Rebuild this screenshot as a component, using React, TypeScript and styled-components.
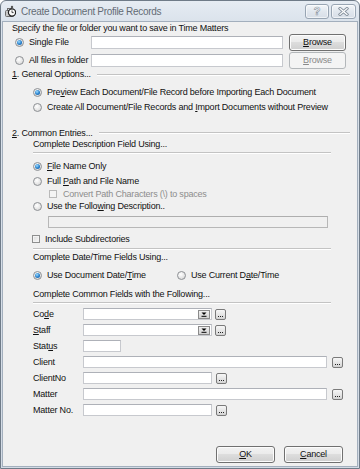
import styled, { createGlobalStyle, css } from "styled-components";

const GlobalStyle = createGlobalStyle`
  html, body { margin: 0; padding: 0; background: #ffffff; }
  body { font-family: "Liberation Sans", Arial, sans-serif; }
  * { box-sizing: border-box; }
`;

const Window = styled.div`
  width: 360px;
  height: 469px;
  display: flex;
  flex-direction: column;
  border: 1px solid #6f7b88;
  border-radius: 6px 6px 0 0;
  padding: 0 1px 1px;
  background: linear-gradient(#e6ecf3, #dae2eb 22px, #d3dbe5);
  overflow: hidden;
`;

const TitleBar = styled.div`
  height: 20px;
  display: flex;
  align-items: center;
  padding: 0 2px 0 3px;
`;

const Title = styled.div`
  flex: 1;
  margin-left: 5px;
  font-size: 10px;
  letter-spacing: -0.3px;
  color: #646c75;
  white-space: nowrap;
`;

const CaptionButtons = styled.div`
  display: flex;
  gap: 2px;
`;

const CaptionButton = styled.div<{ $w: number }>`
  width: ${(p) => p.$w}px;
  height: 15px;
  border: 1px solid #98a5b3;
  border-radius: 3px;
  background: linear-gradient(#f3f6f9, #e1e7ee 50%, #d7dee7);
  box-shadow: inset 0 0 0 1px rgba(255, 255, 255, 0.6);
  display: flex;
  align-items: center;
  justify-content: center;
  font-size: 11px;
  font-weight: bold;
  color: #ffffff;
  -webkit-text-stroke: 0.6px #8a95a1;
`;

const Client = styled.div`
  flex: 1;
  display: flex;
  flex-direction: column;
  background: #f0f0f0;
  border: 1px solid #a3afbd;
  padding: 0 7px 3px 9px;
  font-size: 9px;
  letter-spacing: -0.2px;
  color: #111111;
`;

const Line = styled.div<{ $mt?: number; $h: number; $indent?: number }>`
  display: flex;
  align-items: center;
  flex: none;
  height: ${(p) => p.$h}px;
  margin-top: ${(p) => p.$mt ?? 0}px;
  padding-left: ${(p) => p.$indent ?? 0}px;
  line-height: ${(p) => p.$h}px;
  white-space: nowrap;
`;

const GroupHeading = styled(Line)`
  &::after {
    content: "";
    flex: 1;
    margin-left: 6px;
    border-top: 1px solid #c3c3c3;
    border-bottom: 1px solid #ffffff;
  }
`;

const SubHeading = styled.div<{ $mt?: number }>`
  flex: none;
  margin: ${(p) => p.$mt ?? 0}px 19px 0 21px;
  height: 14px;
  line-height: 10px;
  padding-bottom: 3px;
  border-bottom: 1px solid #c3c3c3;
  box-shadow: 0 1px 0 #ffffff;
  white-space: nowrap;
`;

const Rule = styled.div<{ $mt?: number }>`
  flex: none;
  margin: ${(p) => p.$mt ?? 0}px 19px 0 21px;
  height: 2px;
  border-top: 1px solid #c3c3c3;
  border-bottom: 1px solid #ffffff;
`;

const Option = styled.label<{ $w?: number; $disabled?: boolean; $gap?: number }>`
  display: flex;
  align-items: center;
  gap: ${(p) => p.$gap ?? 5}px;
  width: ${(p) => (p.$w ? `${p.$w}px` : "auto")};
  flex: none;
  color: ${(p) => (p.$disabled ? "#8d8d8d" : "inherit")};
`;

const Radio = styled.span<{ $on?: boolean }>`
  width: 9px;
  height: 9px;
  flex: none;
  border-radius: 50%;
  border: 1px solid #8d9094;
  background: radial-gradient(circle at 40% 35%, #ffffff 0%, #e6e6e6 55%, #cfcfcf 100%);
  display: inline-flex;
  align-items: center;
  justify-content: center;
  ${(p) =>
    p.$on &&
    css`
      &::after {
        content: "";
        width: 5px;
        height: 5px;
        border-radius: 50%;
        background: radial-gradient(circle at 40% 35%, #9fdcff 0%, #2d86d0 50%, #0f4f97 100%);
      }
    `}
`;

const Check = styled.span<{ $disabled?: boolean }>`
  width: 8px;
  height: 8px;
  flex: none;
  border: 1px solid ${(p) => (p.$disabled ? "#b9b9b9" : "#8e8f8f")};
  background: ${(p) =>
    p.$disabled ? "#f4f4f4" : "linear-gradient(135deg, #dcdcdc, #f7f7f7)"};
  box-shadow: inset 0 0 0 1px ${(p) => (p.$disabled ? "#f4f4f4" : "#f3f3f3")};
`;

const Key = styled.u`
  text-decoration: underline;
  text-underline-offset: 1px;
`;

const TextBox = styled.div<{ $w: number; $disabled?: boolean }>`
  width: ${(p) => p.$w}px;
  height: 12px;
  flex: none;
  background: ${(p) => (p.$disabled ? "#f0f0f0" : "#ffffff")};
  border: 1px solid ${(p) => (p.$disabled ? "#b7b7b7" : "#c7c9ce")};
  border-top-color: ${(p) => (p.$disabled ? "#aeaeae" : "#aeb1b8")};
  display: flex;
  align-items: center;
  justify-content: flex-end;
  padding-right: 1px;
`;

const SourceBox = styled(TextBox)`
  height: 13px;
`;

const DescBox = styled(TextBox)`
  margin: 2px 0 0 36px;
`;

const DropButton = styled.div`
  width: 12px;
  height: 9px;
  border: 1px solid #8b8b8b;
  background: linear-gradient(#f0f0f0, #d3d3d3);
  display: flex;
  align-items: center;
  justify-content: center;
`;

const PushButton = styled.div<{ $w: number; $h: number; $disabled?: boolean; $ml?: number }>`
  width: ${(p) => p.$w}px;
  height: ${(p) => p.$h}px;
  flex: none;
  margin-left: ${(p) => p.$ml ?? 0}px;
  border: 1px solid ${(p) => (p.$disabled ? "#b3b7ba" : "#707070")};
  border-radius: 3px;
  background: ${(p) =>
    p.$disabled
      ? "#f4f4f4"
      : "linear-gradient(#f2f2f2, #ebebeb 45%, #dddddd 50%, #cfcfcf)"};
  box-shadow: inset 0 0 0 1px ${(p) => (p.$disabled ? "#f4f4f4" : "#fcfcfc")};
  color: ${(p) => (p.$disabled ? "#8a8a8a" : "#111111")};
  display: flex;
  align-items: center;
  justify-content: center;
  line-height: 1;
`;

const Ellipsis = styled.div<{ $gap: number }>`
  width: 11px;
  height: 11px;
  flex: none;
  margin-left: ${(p) => p.$gap}px;
  border: 1px solid #7a7a7a;
  border-radius: 2px;
  background: linear-gradient(#f6f6f6, #e6e6e6 50%, #d4d4d4);
  display: flex;
  align-items: flex-end;
  justify-content: center;
  padding-bottom: 2px;
  &::before {
    content: "";
    width: 5px;
    height: 1px;
    background: repeating-linear-gradient(90deg, #222 0 1px, transparent 1px 2px);
  }
`;

const FieldLabel = styled.span`
  width: 50px;
  flex: none;
`;

const Footer = styled.div`
  margin-top: auto;
  display: flex;
  justify-content: flex-end;
  gap: 9px;
  padding-right: 7px;
`;

function AppIcon() {
  return (
    <svg width="11" height="12" viewBox="0 0 11 12">
      <rect x="0.5" y="5.5" width="8" height="6" rx="1" fill="#c9c9c9" stroke="#6d6d6d" />
      <rect x="2.5" y="3.5" width="4" height="2" fill="none" stroke="#6d6d6d" />
      <circle cx="7" cy="7.5" r="3.6" fill="#fafafa" stroke="#222" strokeWidth="1.2" />
      <path d="M7 5.5 V7.6 H8.6" stroke="#222" strokeWidth="0.8" fill="none" />
      <circle cx="7" cy="2" r="1.2" fill="#555" />
    </svg>
  );
}

function CloseGlyph() {
  return (
    <svg width="11" height="9" viewBox="0 0 11 9">
      <path d="M2 1.5 L9 7.5 M9 1.5 L2 7.5" stroke="#8a95a1" strokeWidth="3" strokeLinecap="square" />
      <path d="M2 1.5 L9 7.5 M9 1.5 L2 7.5" stroke="#ffffff" strokeWidth="1.2" strokeLinecap="square" />
    </svg>
  );
}

function DropArrow() {
  return (
    <svg width="6" height="5" viewBox="0 0 6 5">
      <path d="M0.5 0.5 H5.5 L3 3 Z" fill="#000" />
      <rect x="0.5" y="3.8" width="5" height="1" fill="#000" />
    </svg>
  );
}

type Field = {
  label: React.ReactNode;
  width: number;
  combo?: boolean;
  more?: number;
};

const fields: Field[] = [
  { label: <>Co<Key>d</Key>e</>, width: 129, combo: true, more: 3 },
  { label: <><Key>S</Key>taff</>, width: 129, combo: true, more: 3 },
  { label: <>Stat<Key>u</Key>s</>, width: 38 },
  { label: "Client", width: 244, more: 5 },
  { label: "ClientNo", width: 129, more: 4 },
  { label: "Matter", width: 244, more: 5 },
  { label: "Matter No.", width: 129, more: 4 },
];

export default function App() {
  return (
    <>
      <GlobalStyle />
      <Window>
        <TitleBar>
          <AppIcon />
          <Title>Create Document Profile Records</Title>
          <CaptionButtons>
            <CaptionButton $w={24}>?</CaptionButton>
            <CaptionButton $w={25}>
              <CloseGlyph />
            </CaptionButton>
          </CaptionButtons>
        </TitleBar>
        <Client>
          <Line $h={12}>Specify the file or folder you want to save in Time Matters</Line>
          <Line $h={17} $indent={3}>
            <Option $w={76}>
              <Radio $on />
              Single File
            </Option>
            <SourceBox $w={192} />
            <PushButton $w={57} $h={17} $ml={6}>
              <Key>B</Key>rowse
            </PushButton>
          </Line>
          <Line $h={17} $mt={1} $indent={3}>
            <Option $w={76}>
              <Radio />
              All files in folder
            </Option>
            <SourceBox $w={192} />
            <PushButton $w={57} $h={17} $ml={6} $disabled>
              <Key>B</Key>rowse
            </PushButton>
          </Line>

          <GroupHeading $h={11}>
            <span>
              <Key>1</Key>. General Options...
            </span>
          </GroupHeading>
          <Line $h={15} $mt={5} $indent={21}>
            <Option>
              <Radio $on />
              <span>
                Pre<Key>v</Key>iew Each Document/File Record before Importing Each Document
              </span>
            </Option>
          </Line>
          <Line $h={15} $indent={21}>
            <Option>
              <Radio />
              <span>
                Create All Document/File Records and <Key>I</Key>mport Documents without Preview
              </span>
            </Option>
          </Line>

          <GroupHeading $h={12} $mt={12}>
            <span>
              <Key>2</Key>. Common Entries...
            </span>
          </GroupHeading>
          <SubHeading>Complete Description Field Using...</SubHeading>
          <Line $h={16} $mt={5} $indent={21}>
            <Option>
              <Radio $on />
              <span>
                <Key>F</Key>ile Name Only
              </span>
            </Option>
          </Line>
          <Line $h={15} $indent={21}>
            <Option>
              <Radio />
              <span>
                Full <Key>P</Key>ath and File Name
              </span>
            </Option>
          </Line>
          <Line $h={10} $indent={37}>
            <Option $disabled $gap={6}>
              <Check $disabled />
              Convert Path Characters (\) to spaces
            </Option>
          </Line>
          <Line $h={15} $indent={21}>
            <Option>
              <Radio />
              <span>
                Use the Follo<Key>w</Key>ing Description..
              </span>
            </Option>
          </Line>
          <DescBox $w={280} $disabled />
          <Line $h={16} $mt={3} $indent={20}>
            <Option>
              <Check />
              Include Subdirectories
            </Option>
          </Line>
          <Rule $mt={1} />
          <Line $h={14} $indent={21}>
            Complete Date/Time Fields Using...
          </Line>
          <Line $h={16} $mt={3} $indent={21}>
            <Option $w={144}>
              <Radio $on />
              <span>
                Use Document Date/<Key>T</Key>ime
              </span>
            </Option>
            <Option>
              <Radio />
              <span>
                Use Current D<Key>a</Key>te/Time
              </span>
            </Option>
          </Line>
          <SubHeading $mt={6}>Complete Common Fields with the Following...</SubHeading>
          {fields.map((f, i) => (
            <Line key={i} $h={16} $mt={i === 0 ? 3 : 0} $indent={21}>
              <FieldLabel>{f.label}</FieldLabel>
              <TextBox $w={f.width}>
                {f.combo && (
                  <DropButton>
                    <DropArrow />
                  </DropButton>
                )}
              </TextBox>
              {f.more !== undefined && <Ellipsis $gap={f.more} />}
            </Line>
          ))}

          <Footer>
            <PushButton $w={59} $h={17}>
              <Key>O</Key>K
            </PushButton>
            <PushButton $w={59} $h={17}>
              <Key>C</Key>ancel
            </PushButton>
          </Footer>
        </Client>
      </Window>
    </>
  );
}
